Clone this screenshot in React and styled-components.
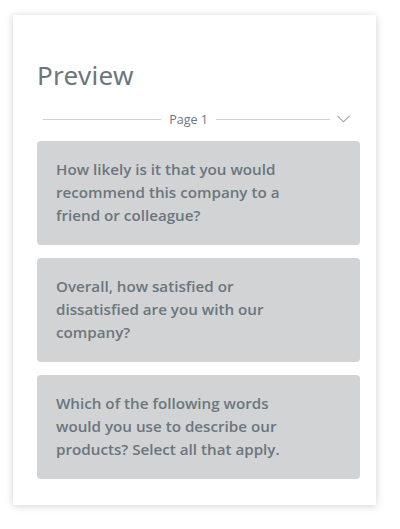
import React from 'react';
import styled, { createGlobalStyle } from 'styled-components';

const Global = createGlobalStyle`
  html, body {
    margin: 0;
    padding: 0;
    background: #ffffff;
  }
  body {
    font-family: "Open Sans", "Noto Sans", sans-serif;
  }
`;

const Page = styled.div`
  width: 400px;
  height: 529px;
  padding: 15px 0 0 13px;
  box-sizing: border-box;
`;

const Card = styled.div`
  width: 363px;
  height: 490px;
  background: #ffffff;
  box-shadow: 0 1px 8px rgba(0, 0, 0, 0.18);
  box-sizing: border-box;
  padding: 42px 16px 0 24px;
`;

const Title = styled.h1`
  margin: 0;
  font-family: "Noto Sans", "Open Sans", sans-serif;
  font-weight: 400;
  font-size: 26px;
  line-height: 36px;
  color: #6a767e;
  letter-spacing: 0.3px;
`;

const PageBar = styled.div`
  display: flex;
  align-items: center;
  height: 20px;
  margin: 16px 0 12px 6px;
`;

const Rule = styled.div`
  flex: ${(p) => p.grow};
  height: 1px;
  background: #cfd2d4;
`;

const PageLabel = styled.span`
  padding: 0 8px;
  font-size: 12.5px;
  color: #6b7880;
  font-family: "Open Sans", sans-serif;
`;

const Chevron = styled.span`
  display: flex;
  margin-left: 7px;
  margin-right: 10px;
`;

const List = styled.div`
  display: flex;
  flex-direction: column;
  gap: 13px;
  width: 323px;
`;

const Question = styled.div`
  height: 104px;
  box-sizing: border-box;
  background: #d1d3d5;
  border-radius: 4px;
  padding: 17px 20px 0 19px;
  font-size: 15.2px;
  font-weight: 600;
  line-height: 23px;
  color: #6b767d;
`;

const questions = [
  ['How likely is it that you would', 'recommend this company to a', 'friend or colleague?'],
  ['Overall, how satisfied or', 'dissatisfied are you with our', 'company?'],
  ['Which of the following words', 'would you use to describe our', 'products? Select all that apply.'],
];

export default function App() {
  return (
    <Page>
      <Global />
      <Card>
        <Title>Preview</Title>
        <PageBar>
          <Rule grow="117" />
          <PageLabel>Page 1</PageLabel>
          <Rule grow="113" />
          <Chevron>
            <svg width="13" height="8" viewBox="0 0 13 8" fill="none">
              <path d="M0.5 0.8 L6.5 6.8 L12.5 0.8" stroke="#9aa2a8" strokeWidth="1.1" />
            </svg>
          </Chevron>
        </PageBar>
        <List>
          {questions.map((lines, i) => (
            <Question key={i}>
              {lines.map((l, j) => (
                <div key={j}>{l}</div>
              ))}
            </Question>
          ))}
        </List>
      </Card>
    </Page>
  );
}
